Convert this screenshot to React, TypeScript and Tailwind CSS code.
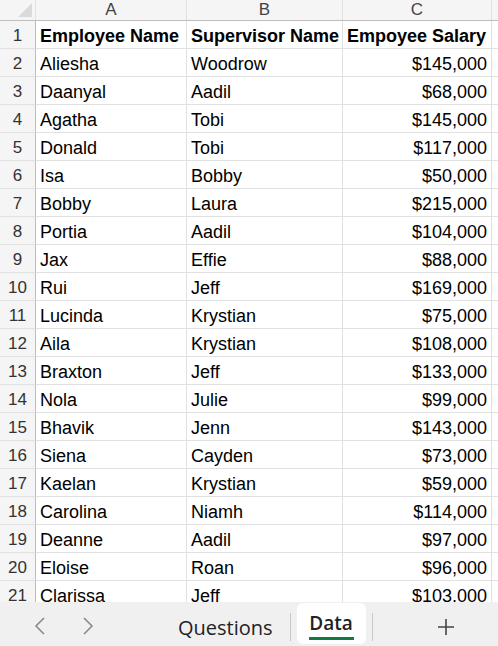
import React from 'react';

const rows: [string, string, string][] = [
  ['Aliesha', 'Woodrow', '$145,000'],
  ['Daanyal', 'Aadil', '$68,000'],
  ['Agatha', 'Tobi', '$145,000'],
  ['Donald', 'Tobi', '$117,000'],
  ['Isa', 'Bobby', '$50,000'],
  ['Bobby', 'Laura', '$215,000'],
  ['Portia', 'Aadil', '$104,000'],
  ['Jax', 'Effie', '$88,000'],
  ['Rui', 'Jeff', '$169,000'],
  ['Lucinda', 'Krystian', '$75,000'],
  ['Aila', 'Krystian', '$108,000'],
  ['Braxton', 'Jeff', '$133,000'],
  ['Nola', 'Julie', '$99,000'],
  ['Bhavik', 'Jenn', '$143,000'],
  ['Siena', 'Cayden', '$73,000'],
  ['Kaelan', 'Krystian', '$59,000'],
  ['Carolina', 'Niamh', '$114,000'],
  ['Deanne', 'Aadil', '$97,000'],
  ['Eloise', 'Roan', '$96,000'],
  ['Clarissa', 'Jeff', '$103,000'],
];

const cell =
  'h-[28px] border-r border-b border-[#e1e1e1] flex items-center px-[4px] pt-[3px] text-[18px] text-black whitespace-nowrap';
const rowHead =
  'w-[36px] h-[28px] shrink-0 bg-[#f5f5f5] border-r border-b border-r-[#bdbdbd] border-b-[#e1e1e1] flex items-center justify-center pt-[3px] text-[17px] text-[#333]';

export default function App() {
  return (
    <div className="w-[498px] h-[646px] flex flex-col bg-white overflow-hidden font-['Liberation_Sans',sans-serif]">
      <div className="flex-1 overflow-hidden">
        {/* column letters */}
        <div className="flex h-[21px] bg-[#f5f5f5] border-b border-[#bdbdbd] text-[17px] text-[#444]">
          <div className="w-[36px] shrink-0 border-r border-[#e1e1e1] relative">
            <div className="absolute right-[3px] bottom-[3px] w-0 h-0 border-l-[14px] border-l-transparent border-b-[14px] border-b-[#dadada]" />
          </div>
          <div className="w-[151px] shrink-0 border-r border-[#e1e1e1] flex items-center justify-center">A</div>
          <div className="w-[156px] shrink-0 border-r border-[#e1e1e1] flex items-center justify-center">B</div>
          <div className="w-[149px] shrink-0 border-r border-[#e1e1e1] flex items-center justify-center">C</div>
          <div className="flex-1" />
        </div>

        <div className="flex">
          <div className={rowHead}>1</div>
          <div className={`${cell} w-[151px] shrink-0 font-bold text-[17px]`}>Employee Name</div>
          <div className={`${cell} w-[156px] shrink-0 font-bold text-[17px]`}>Supervisor Name</div>
          <div className={`${cell} w-[149px] shrink-0 font-bold text-[17px]`}>Empoyee Salary</div>
          <div className={`${cell} flex-1`} />
        </div>

        {rows.map((r, i) => (
          <div key={i} className="flex">
            <div className={rowHead}>{i + 2}</div>
            <div className={`${cell} w-[151px] shrink-0`}>{r[0]}</div>
            <div className={`${cell} w-[156px] shrink-0`}>{r[1]}</div>
            <div className={`${cell} w-[149px] shrink-0 justify-end`}>{r[2]}</div>
            <div className={`${cell} flex-1`} />
          </div>
        ))}
      </div>

      {/* sheet tabs */}
      <div className="h-[44px] shrink-0 bg-[#f0f0f0] flex items-end font-['Open_Sans',sans-serif]">
        <div className="h-full flex items-center pt-[4px]">
          <button className="w-[24px] ml-[28px] flex justify-center text-[#8a8a8a]">
            <svg width="12" height="20" viewBox="0 0 12 20" fill="none" stroke="currentColor" strokeWidth="1.6">
              <path d="M10 2 L2 10 L10 18" />
            </svg>
          </button>
          <button className="w-[24px] ml-[24px] flex justify-center text-[#8a8a8a]">
            <svg width="12" height="20" viewBox="0 0 12 20" fill="none" stroke="currentColor" strokeWidth="1.6">
              <path d="M2 2 L10 10 L2 18" />
            </svg>
          </button>
        </div>
        <div className="h-full flex items-center pt-[7px] pl-[78px] pr-[17px] text-[20px] text-[#222]">
          Questions
        </div>
        <div className="h-[28px] mb-[5px] w-px bg-[#c8c8c8]" />
        <div className="h-[41px] ml-[6px] w-[69px] mb-[2px] bg-white rounded-[6px] flex flex-col items-center justify-center text-[19px] font-semibold text-[#222]">
          <span className="leading-[26px] mt-[3px]">Data</span>
          <div className="w-[45px] h-[3px] bg-[#107c41] mt-[1px]" />
        </div>
        <div className="h-[28px] mb-[5px] w-px bg-[#c8c8c8] ml-[6px]" />
        <div className="flex-1 h-full flex items-center justify-center pt-[6px] pl-[22px] text-[#444]">
          <svg width="18" height="18" viewBox="0 0 18 18" stroke="currentColor" strokeWidth="1.6">
            <path d="M9 1 V17 M1 9 H17" />
          </svg>
        </div>
      </div>
    </div>
  );
}
